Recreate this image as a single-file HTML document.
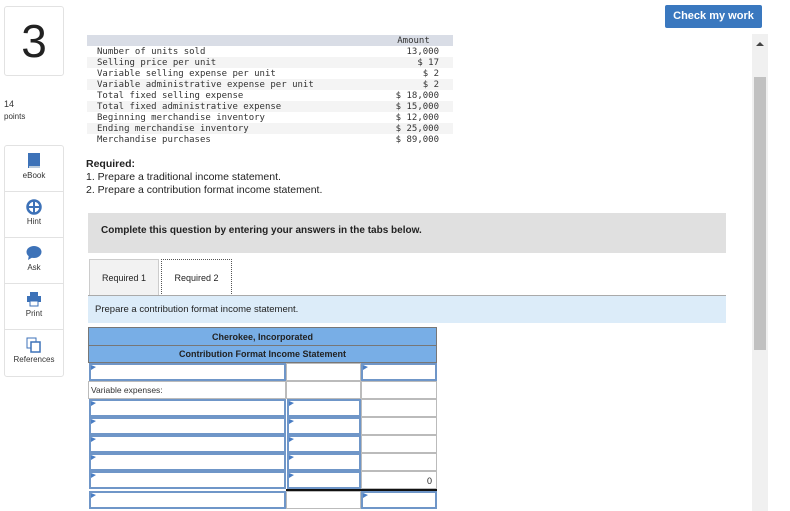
<!DOCTYPE html>
<html><head><style>
*{margin:0;padding:0;box-sizing:border-box}
body{width:790px;height:511px;overflow:hidden;background:#fff;font-family:"Liberation Sans",sans-serif;position:relative;color:#222}
.abs{position:absolute}
.mono{font-family:"DejaVu Sans Mono","Liberation Mono",monospace;font-size:9px;line-height:11px;color:#333}
.dr{position:absolute;left:87px;width:366px;height:11px;padding-top:1px}
.dr span{position:absolute;left:10px}
.dr b{position:absolute;right:14px;font-weight:normal}
.side{position:absolute;left:4px;width:60px;border:1px solid #e2e2e2;border-radius:3px}
.it{height:46px;border-bottom:1px solid #e2e2e2;text-align:center;font-size:8px;color:#333;padding-top:7px}
.it:last-child{border-bottom:none}
.it svg{display:block;margin:0 auto 2px}
.cell{position:absolute;height:18px;border:1px solid #bbb}
.inp{position:absolute;height:18px;border:2px solid #6f96c8;background:#fff}
.inp:before{content:"";position:absolute;left:0;top:0;border-left:5px solid #4a7ec4;border-bottom:3px solid transparent;border-top:2px solid transparent}
</style></head><body>
<div class="side" style="top:6px;height:70px;font-size:46px;text-align:center;line-height:68px;color:#222">3</div>
<div class="abs" style="left:4px;top:98px;font-size:9px;color:#333;line-height:12px">14<br><span style="font-size:8px">points</span></div>
<div class="side" style="top:145px;height:232px">
<div class="it"><svg width="16" height="16"><rect x="2" y="0" width="12" height="15" fill="#3d72b8"/><rect x="3" y="13" width="11" height="2" fill="#bcd"/></svg>eBook</div>
<div class="it"><svg width="16" height="16"><circle cx="8" cy="8" r="6.5" fill="none" stroke="#3d72b8" stroke-width="2.5"/><path d="M8 1v14M1 8h14" stroke="#3d72b8" stroke-width="2"/></svg>Hint</div>
<div class="it"><svg width="16" height="16"><ellipse cx="8" cy="7" rx="7.5" ry="6" fill="#3d72b8"/><path d="M3 10l-1 5 5-3z" fill="#3d72b8"/></svg>Ask</div>
<div class="it"><svg width="16" height="16"><rect x="4" y="1" width="8" height="4" fill="#3d72b8"/><rect x="1" y="5" width="14" height="6" fill="#3d72b8"/><rect x="4" y="10" width="8" height="5" fill="#fff" stroke="#3d72b8"/></svg>Print</div>
<div class="it"><svg width="16" height="16"><rect x="1" y="1" width="9" height="10" fill="#fff" stroke="#3d72b8"/><rect x="5" y="5" width="9" height="10" fill="#fff" stroke="#3d72b8" stroke-width="1.5"/></svg>References</div>
</div>

<div class="abs" style="left:665px;top:5px;width:97px;height:23px;background:#3a78bf;border-radius:2px;color:#fff;font-weight:bold;font-size:11px;text-align:center;line-height:22px">Check my work</div>
<div class="abs" style="left:752px;top:34px;width:16px;height:477px;background:#f0f0f0"></div>
<div class="abs" style="left:754px;top:77px;width:12px;height:273px;background:#c1c1c1"></div>
<div class="abs" style="left:756px;top:42px;border-left:4px solid transparent;border-right:4px solid transparent;border-bottom:4px solid #444"></div>

<div class="mono">
<div class="dr" style="top:35px;background:#d9dde6"><b style="right:0;width:79px;text-align:center">Amount</b></div>
<div class="dr" style="top:46px"><span>Number of units sold</span><b>13,000</b></div>
<div class="dr" style="top:57px;background:#f4f4f4"><span>Selling price per unit</span><b>$ 17</b></div>
<div class="dr" style="top:68px"><span>Variable selling expense per unit</span><b>$ 2</b></div>
<div class="dr" style="top:79px;background:#f4f4f4"><span>Variable administrative expense per unit</span><b>$ 2</b></div>
<div class="dr" style="top:90px"><span>Total fixed selling expense</span><b>$ 18,000</b></div>
<div class="dr" style="top:101px;background:#f4f4f4"><span>Total fixed administrative expense</span><b>$ 15,000</b></div>
<div class="dr" style="top:112px"><span>Beginning merchandise inventory</span><b>$ 12,000</b></div>
<div class="dr" style="top:123px;background:#f4f4f4"><span>Ending merchandise inventory</span><b>$ 25,000</b></div>
<div class="dr" style="top:134px"><span>Merchandise purchases</span><b>$ 89,000</b></div>
</div>

<div class="abs" style="left:86px;top:158px;font-size:10.5px;line-height:13px;color:#222"><b>Required:</b><br>1. Prepare a traditional income statement.<br>2. Prepare a contribution format income statement.</div>

<div class="abs" style="left:88px;top:213px;width:638px;height:40px;background:#e0e0e0;font-size:10px;font-weight:bold;padding:12px 0 0 13px">Complete this question by entering your answers in the tabs below.</div>

<div class="abs" style="left:89px;top:259px;width:70px;height:37px;background:#f2f2f2;border:1px solid #ccc;font-size:9px;text-align:center;line-height:36px">Required 1</div>
<div class="abs" style="left:161px;top:259px;width:71px;height:37px;background:#fff;border:1px dotted #555;border-bottom:none;font-size:9px;text-align:center;line-height:36px">Required 2</div>
<div class="abs" style="left:88px;top:295px;width:638px;height:28px;background:#dcecf9;border-top:1px solid #aaa;font-size:9.5px;padding:8px 0 0 7px">Prepare a contribution format income statement.</div>

<div class="abs" style="left:88px;top:327px;width:349px;height:36px;background:#78aee6;border:1px solid #777;font-size:9px;font-weight:bold;text-align:center;color:#222">
<div style="height:18px;line-height:18px;border-bottom:1px solid #777">Cherokee, Incorporated</div>
<div style="height:17px;line-height:17px">Contribution Format Income Statement</div></div>

<div class="inp" style="left:89px;top:363px;width:197px"></div>
<div class="cell" style="left:286px;top:363px;width:75px"></div>
<div class="inp" style="left:361px;top:363px;width:76px"></div>

<div class="cell" style="left:88px;top:381px;width:198px;font-size:8.5px;padding:3px 0 0 2px;color:#333">Variable expenses:</div>
<div class="cell" style="left:286px;top:381px;width:75px"></div>
<div class="cell" style="left:361px;top:381px;width:76px"></div>

<div class="inp" style="left:89px;top:399px;width:197px"></div><div class="inp" style="left:287px;top:399px;width:74px"></div><div class="cell" style="left:361px;top:399px;width:76px"></div>
<div class="inp" style="left:89px;top:417px;width:197px"></div><div class="inp" style="left:287px;top:417px;width:74px"></div><div class="cell" style="left:361px;top:417px;width:76px"></div>
<div class="inp" style="left:89px;top:435px;width:197px"></div><div class="inp" style="left:287px;top:435px;width:74px"></div><div class="cell" style="left:361px;top:435px;width:76px"></div>
<div class="inp" style="left:89px;top:453px;width:197px"></div><div class="inp" style="left:287px;top:453px;width:74px"></div><div class="cell" style="left:361px;top:453px;width:76px"></div>
<div class="inp" style="left:89px;top:471px;width:197px"></div><div class="inp" style="left:287px;top:471px;width:74px"></div><div class="cell" style="left:361px;top:471px;width:76px;font-size:9px;text-align:right;padding:4px 4px 0 0">0</div>
<div class="abs" style="left:286px;top:489px;width:151px;height:2px;background:#111"></div>
<div class="inp" style="left:89px;top:491px;width:197px"></div><div class="cell" style="left:286px;top:491px;width:75px"></div><div class="inp" style="left:361px;top:491px;width:76px"></div>
</body></html>
